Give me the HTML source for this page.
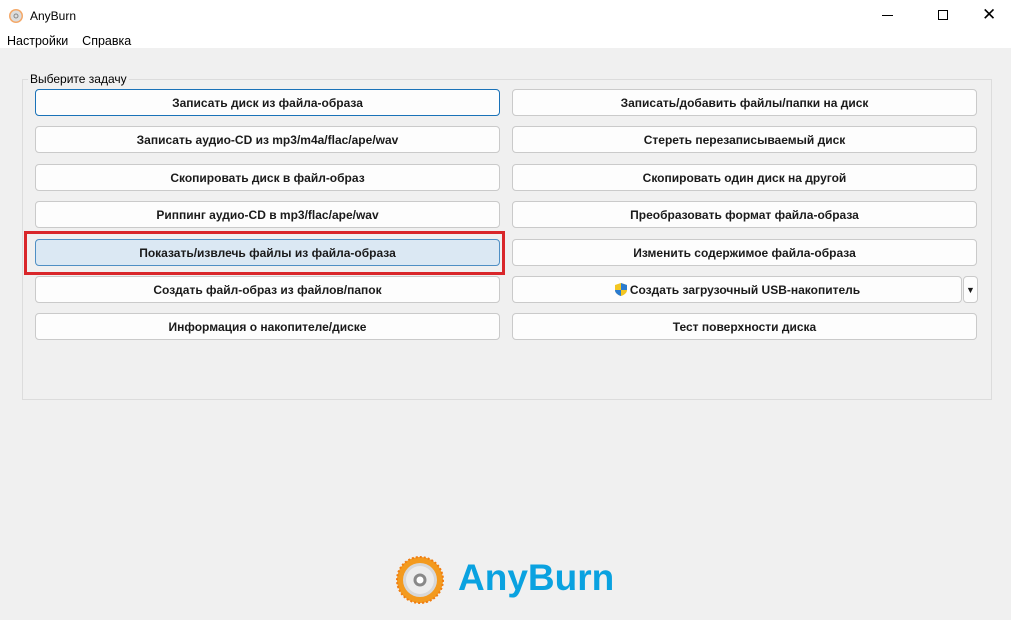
<!DOCTYPE html>
<html><head><meta charset="utf-8"><style>
*{margin:0;padding:0;box-sizing:border-box}
body{width:1011px;height:620px;background:#f0f0f0;font-family:"Liberation Sans",sans-serif;position:relative;overflow:hidden}
.top{position:absolute;left:0;top:0;width:1011px;height:48px;background:#fff}
.t{position:absolute;font-size:12px;color:#000}
.box{position:absolute;left:22px;top:79px;width:970px;height:321px;border:1px solid #dcdcdc}
.lg{position:absolute;left:28px;top:72px;background:#f0f0f0;padding:0 2px;font-size:12px}
.b{position:absolute;height:27px;width:465px;background:#fdfdfd;border:1px solid #cacaca;border-radius:4px;font-size:12px;font-weight:bold;color:#1a1a1a;display:flex;align-items:center;justify-content:center}
.hl{position:absolute;left:24px;top:231px;width:481px;height:44px;border:3px solid #d9262a}
</style></head><body>
<div class="top"></div>
<svg style="position:absolute;left:8px;top:8px" width="16" height="16"><circle cx="8" cy="8" r="7" fill="#f4a868"/><circle cx="8" cy="8" r="5.5" fill="#ddd"/><circle cx="8" cy="8" r="2" fill="none" stroke="#888"/></svg>
<div class="t" style="left:30px;top:9px">AnyBurn</div>
<div style="position:absolute;left:882px;top:15px;width:11px;height:1px;background:#000"></div>
<div style="position:absolute;left:938px;top:10px;width:10px;height:10px;border:1px solid #000"></div>
<div class="t" style="left:982px;top:5px;font-size:17px">✕</div>
<div class="t" style="left:7px;top:34px;font-size:12.5px">Настройки&nbsp;&nbsp;&nbsp;&nbsp;Справка</div>
<div class="box"></div>
<div class="lg">Выберите задачу</div>
<div class="b" style="left:35px;top:89px;border:1px solid #1a72b8;">Записать диск из файла-образа</div>
<div class="b" style="left:512px;top:89px">Записать/добавить файлы/папки на диск</div>
<div class="b" style="left:35px;top:126px">Записать аудио-CD из mp3/m4a/flac/ape/wav</div>
<div class="b" style="left:512px;top:126px">Стереть перезаписываемый диск</div>
<div class="b" style="left:35px;top:164px">Скопировать диск в файл-образ</div>
<div class="b" style="left:512px;top:164px">Скопировать один диск на другой</div>
<div class="b" style="left:35px;top:201px">Риппинг аудио-CD в mp3/flac/ape/wav</div>
<div class="b" style="left:512px;top:201px">Преобразовать формат файла-образа</div>
<div class="b" style="left:35px;top:239px;background:#dbe8f3;border-color:#4f8fc4">Показать/извлечь файлы из файла-образа</div>
<div class="b" style="left:512px;top:239px">Изменить содержимое файла-образа</div>
<div class="b" style="left:35px;top:276px">Создать файл-образ из файлов/папок</div>
<div class="b" style="left:512px;top:276px;width:450px"><svg width="14" height="15" style="margin-right:2px"><path d="M7 1L13 3V8C13 11 10 13 7 14C4 13 1 11 1 8V3Z" fill="#f3c623"/><path d="M7 1L13 3V8H7ZM7 8V14C4 13 1 11 1 8Z" fill="#2a7bd0"/></svg>Создать загрузочный USB-накопитель</div>
<div class="b" style="left:963px;top:276px;width:15px;font-size:9px">▼</div>
<div class="b" style="left:35px;top:313px">Информация о накопителе/диске</div>
<div class="b" style="left:512px;top:313px">Тест поверхности диска</div>
<div class="hl"></div>
<svg style="position:absolute;left:396px;top:556px" width="48" height="48" viewBox="0 0 48 48">
<circle cx="24" cy="24" r="23" fill="#f39a1e" stroke="#f07c10" stroke-width="2" stroke-dasharray="2 2"/>
<circle cx="24" cy="24" r="17" fill="#d8d8d8"/><circle cx="24" cy="24" r="14" fill="#ececec"/>
<circle cx="24" cy="24" r="5" fill="#fff" stroke="#888" stroke-width="3"/></svg>
<div style="position:absolute;left:458px;top:557px;font-size:37px;font-weight:bold;color:#0aa2e0">AnyBurn</div>
</body></html>
